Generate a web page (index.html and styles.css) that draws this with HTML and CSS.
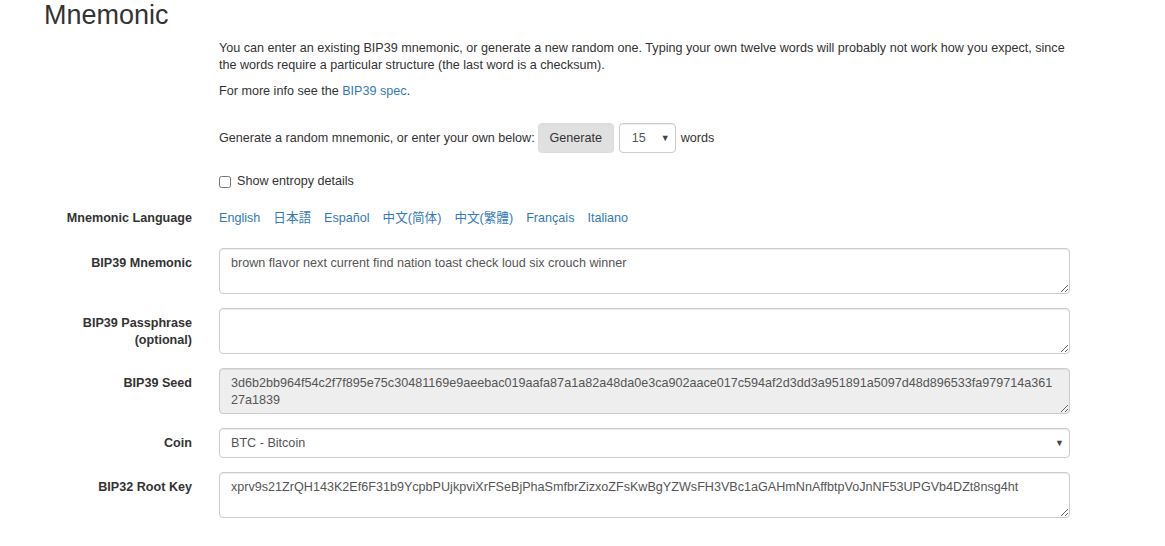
FILE: index.html
```html
<!DOCTYPE html>
<html>
<head>
<meta charset="utf-8">
<link rel="stylesheet" href="styles.css">
</head>
<body>
<div class="page">
  <h2 class="title">Mnemonic</h2>
  <div class="row">
    <div class="label-col"></div>
    <div class="ctrl-col intro">
      <p class="p1">You can enter an existing BIP39 mnemonic, or generate a new random one. Typing your own twelve words will probably not work how you expect, since the words require a particular structure (the last word is a checksum).</p>
      <p class="p2">For more info see the <a href="#">BIP39 spec</a>.</p>
    </div>
  </div>
  <div class="row gen-row">
    <div class="label-col"></div>
    <div class="ctrl-col gen">
      <span>Generate a random mnemonic, or enter your own below:</span>
      <button class="btn">Generate</button>
      <div class="sel-wrap small">
        <select class="num"><option>15</option></select>
        <span class="arrow">&#9660;</span>
      </div>
      <span>words</span>
    </div>
  </div>
  <div class="row check-row">
    <div class="label-col"></div>
    <div class="ctrl-col check">
      <input type="checkbox" class="cb"><span>Show entropy details</span>
    </div>
  </div>
  <div class="row lang-row">
    <div class="label-col"><label>Mnemonic Language</label></div>
    <div class="ctrl-col langs">
      <a href="#">English</a>
      <a href="#" class="cjk">日本語</a>
      <a href="#">Español</a>
      <a href="#" class="cjk">中文(简体)</a>
      <a href="#" class="cjk tc">中文(繁體)</a>
      <a href="#">Français</a>
      <a href="#">Italiano</a>
    </div>
  </div>
  <div class="row field">
    <div class="label-col"><label>BIP39 Mnemonic</label></div>
    <div class="ctrl-col"><textarea class="ta">brown flavor next current find nation toast check loud six crouch winner</textarea></div>
  </div>
  <div class="row field">
    <div class="label-col"><label>BIP39 Passphrase<br>(optional)</label></div>
    <div class="ctrl-col"><textarea class="ta"></textarea></div>
  </div>
  <div class="row field">
    <div class="label-col"><label>BIP39 Seed</label></div>
    <div class="ctrl-col"><textarea class="ta ro" readonly>3d6b2bb964f54c2f7f895e75c30481169e9aeebac019aafa87a1a82a48da0e3ca902aace017c594af2d3dd3a951891a5097d48d896533fa979714a36127a1839</textarea></div>
  </div>
  <div class="row field">
    <div class="label-col"><label>Coin</label></div>
    <div class="ctrl-col">
      <div class="sel-wrap">
        <select class="coin"><option>BTC - Bitcoin</option></select>
        <span class="arrow">&#9660;</span>
      </div>
    </div>
  </div>
  <div class="row field">
    <div class="label-col"><label>BIP32 Root Key</label></div>
    <div class="ctrl-col"><textarea class="ta">xprv9s21ZrQH143K2Ef6F31b9YcpbPUjkpviXrFSeBjPhaSmfbrZizxoZFsKwBgYZWsFH3VBc1aGAHmNnAffbtpVoJnNF53UPGVb4DZt8nsg4ht</textarea></div>
  </div>
</div>
</body>
</html>
```

FILE: styles.css
```css
html, body {
  margin: 0;
  padding: 0;
  background: #fff;
}
body {
  font-family: "Liberation Sans", Arial, sans-serif;
  font-size: 12.6px;
  line-height: 17px;
  color: #333;
}
.page {
  width: 1070px;
}
.title {
  margin: 0 0 10px 44px;
  font-size: 27px;
  line-height: 30px;
  font-weight: normal;
  color: #333;
}
.row {
  display: flex;
  gap: 27px;
}
.label-col {
  width: 192px;
  flex: none;
  text-align: right;
}
.label-col label {
  display: block;
  font-weight: bold;
}
.ctrl-col {
  width: 851px;
  flex: none;
}
.intro p {
  margin: 0;
}
.intro .p1 {
  margin-bottom: 9px;
}
a {
  color: #337ab7;
  text-decoration: none;
}
.gen-row {
  margin-top: 23px;
}
.gen {
  display: flex;
  align-items: center;
  height: 30px;
}
.btn {
  font-family: inherit;
  font-size: 12.6px;
  color: #333;
  background: #e0e0e0;
  border: 1px solid #dcdcdc;
  border-radius: 4px;
  height: 30px;
  width: 76px;
  margin-left: 3px;
  padding: 0;
}
.sel-wrap {
  position: relative;
}
.sel-wrap.small {
  margin-left: 5px;
  margin-right: 5px;
}
select {
  appearance: none;
  -webkit-appearance: none;
  font-family: inherit;
  font-size: 12.6px;
  color: #555;
  background: #fff;
  border: 1px solid #ccc;
  border-radius: 4px;
  box-shadow: inset 0 1px 1px rgba(0,0,0,.075);
  height: 30px;
  display: block;
}
.num {
  width: 57px;
  padding: 0 0 0 12px;
}
.coin {
  width: 851px;
  padding: 0 0 0 11px;
}
.arrow {
  position: absolute;
  right: 6px;
  top: 9px;
  font-size: 9px;
  line-height: 12px;
  color: #444;
  pointer-events: none;
}
.check-row {
  margin-top: 20px;
}
.check {
  display: flex;
  align-items: center;
  height: 17px;
}
.cb {
  width: 12px;
  height: 12px;
  margin: 0 6px 0 0;
}
.lang-row {
  margin-top: 20px;
}
.langs {
  display: flex;
  gap: 13px;
}
.cjk {
  font-family: "Liberation Sans", "Noto Sans CJK JP", sans-serif;
}
.tc {
  font-family: "Liberation Sans", "Noto Sans CJK TC", sans-serif;
}
.field {
  margin-top: 14px;
}
.lang-row + .field {
  margin-top: 21px;
}
.field .label-col label {
  padding-top: 7px;
}
.ta {
  display: block;
  box-sizing: border-box;
  width: 851px;
  height: 46px;
  margin: 0;
  padding: 6px 11px;
  font-family: inherit;
  font-size: 12.6px;
  line-height: 17px;
  color: #555;
  background: #fff;
  border: 1px solid #ccc;
  border-radius: 4px;
  box-shadow: inset 0 1px 1px rgba(0,0,0,.075);
  resize: vertical;
  overflow: hidden;
}
.ta.ro {
  background: #eee;
}
```
